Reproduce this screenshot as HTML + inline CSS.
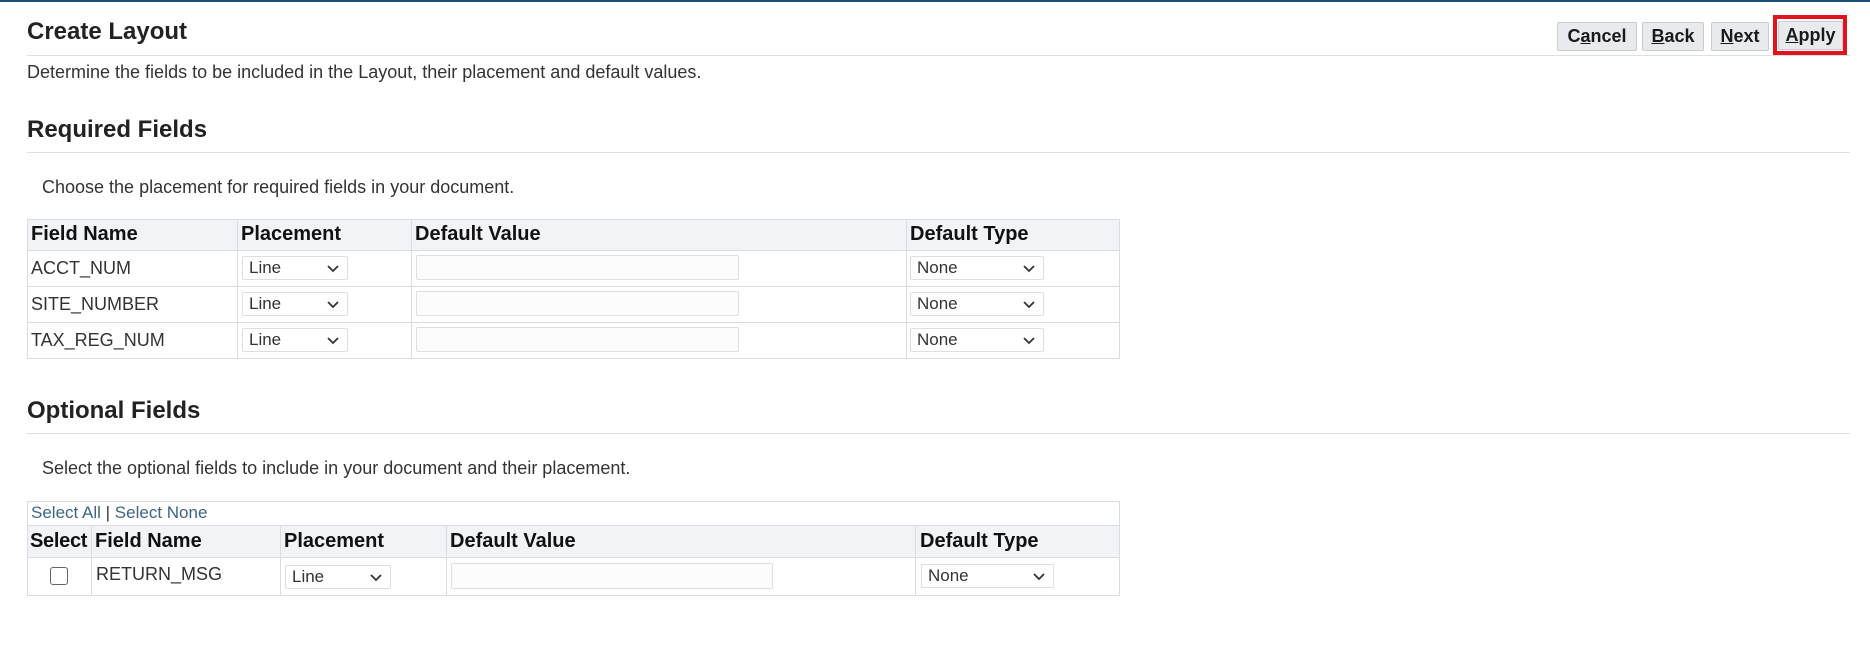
<!DOCTYPE html>
<html><head><meta charset="utf-8"><style>
*{box-sizing:border-box;margin:0;padding:0}
body{width:1870px;height:667px;background:#fff;font-family:"Liberation Sans",Arial,sans-serif;color:#2b2b2b;position:relative;overflow:hidden}
.a{position:absolute;white-space:nowrap}
.topbar{left:0;top:0;width:1870px;height:2px;background:#1f4e79}
.h1{font-size:24px;font-weight:bold;color:#222}
.hr{height:1px;background:#dcdfe3}
.t16{font-size:18px;color:#333}
.btn{top:22px;height:29px;border:1px solid #c9ccd0;border-radius:2px;background:#e8eaed;font-size:18px;font-weight:bold;color:#1a1a1a;text-align:center;line-height:27px}
.btn u{text-decoration:underline}
.box{border:1px solid #d8dde3}
.hdr{background:#f2f3f6}
.vl{width:1px;background:#d8dde3}
.hl{height:1px;background:#d8dde3}
.th{font-size:20px;font-weight:bold;color:#111}
.td{font-size:18px;color:#333}
.sel{border:1px solid #dcdfe3;border-radius:2px;background:#fff;font-size:17px;color:#333;padding-left:6px;line-height:22px}
.sel svg{position:absolute;right:8px;top:8px}
.inp{border:1px solid #dcdfe3;border-radius:2px;background:#fcfcfd}
.lnk{color:#3c6586;font-size:17px}
</style></head><body>
<div class="a topbar"></div>
<div class="a h1" style="left:27px;top:18px">Create Layout</div>
<div class="a btn" style="left:1557px;width:80px">C<u>a</u>ncel</div>
<div class="a btn" style="left:1642px;width:62px"><u>B</u>ack</div>
<div class="a btn" style="left:1711px;width:58px"><u>N</u>ext</div>
<div class="a" style="left:1773px;top:15px;width:74px;height:40px;border:4px solid #e3121c"></div>
<div class="a btn" style="left:1778px;width:65px;top:21px"><u>A</u>pply</div>
<div class="a hr" style="left:27px;top:55px;width:1823px"></div>
<div class="a t16" style="left:27px;top:62px">Determine the fields to be included in the Layout, their placement and default values.</div>
<div class="a h1" style="left:27px;top:116px">Required Fields</div>
<div class="a hr" style="left:27px;top:152px;width:1823px"></div>
<div class="a t16" style="left:42px;top:177px">Choose the placement for required fields in your document.</div>

<div class="a box" style="left:27px;top:219px;width:1093px;height:140px"></div>
<div class="a hdr" style="left:28px;top:220px;width:1091px;height:30px"></div>
<div class="a hl" style="left:28px;top:250px;width:1091px"></div>
<div class="a hl" style="left:28px;top:286px;width:1091px"></div>
<div class="a hl" style="left:28px;top:322px;width:1091px"></div>
<div class="a vl" style="left:237px;top:220px;height:138px"></div>
<div class="a vl" style="left:411px;top:220px;height:138px"></div>
<div class="a vl" style="left:906px;top:220px;height:138px"></div>
<div class="a th" style="left:31px;top:223px">Field Name</div>
<div class="a th" style="left:241px;top:223px">Placement</div>
<div class="a th" style="left:415px;top:223px">Default Value</div>
<div class="a th" style="left:910px;top:223px">Default Type</div>

<div class="a td" style="left:31px;top:258px">ACCT_NUM</div>
<div class="a td" style="left:31px;top:294px">SITE_NUMBER</div>
<div class="a td" style="left:31px;top:330px">TAX_REG_NUM</div>

<div class="a sel" style="left:242px;top:256px;width:106px;height:24px">Line<svg width="12" height="8"><path d="M1 1l5 5 5-5" stroke="#333" stroke-width="1.8" fill="none"/></svg></div>
<div class="a sel" style="left:242px;top:292px;width:106px;height:24px">Line<svg width="12" height="8"><path d="M1 1l5 5 5-5" stroke="#333" stroke-width="1.8" fill="none"/></svg></div>
<div class="a sel" style="left:242px;top:328px;width:106px;height:24px">Line<svg width="12" height="8"><path d="M1 1l5 5 5-5" stroke="#333" stroke-width="1.8" fill="none"/></svg></div>
<div class="a inp" style="left:416px;top:255px;width:323px;height:25px"></div>
<div class="a inp" style="left:416px;top:291px;width:323px;height:25px"></div>
<div class="a inp" style="left:416px;top:327px;width:323px;height:25px"></div>
<div class="a sel" style="left:910px;top:256px;width:134px;height:24px">None<svg width="12" height="8"><path d="M1 1l5 5 5-5" stroke="#333" stroke-width="1.8" fill="none"/></svg></div>
<div class="a sel" style="left:910px;top:292px;width:134px;height:24px">None<svg width="12" height="8"><path d="M1 1l5 5 5-5" stroke="#333" stroke-width="1.8" fill="none"/></svg></div>
<div class="a sel" style="left:910px;top:328px;width:134px;height:24px">None<svg width="12" height="8"><path d="M1 1l5 5 5-5" stroke="#333" stroke-width="1.8" fill="none"/></svg></div>

<div class="a h1" style="left:27px;top:397px">Optional Fields</div>
<div class="a hr" style="left:27px;top:433px;width:1823px"></div>
<div class="a t16" style="left:42px;top:458px">Select the optional fields to include in your document and their placement.</div>

<div class="a box" style="left:27px;top:501px;width:1093px;height:95px"></div>
<div class="a lnk" style="left:31px;top:503px">Select All <span style="color:#333">|</span> Select None</div>
<div class="a hdr" style="left:28px;top:525px;width:1091px;height:32px"></div>
<div class="a hl" style="left:28px;top:525px;width:1091px"></div>
<div class="a hl" style="left:28px;top:557px;width:1091px"></div>
<div class="a vl" style="left:91px;top:526px;height:69px"></div>
<div class="a vl" style="left:280px;top:526px;height:69px"></div>
<div class="a vl" style="left:446px;top:526px;height:69px"></div>
<div class="a vl" style="left:915px;top:526px;height:69px"></div>
<div class="a th" style="left:30px;top:530px;letter-spacing:-0.3px">Select</div>
<div class="a th" style="left:95px;top:530px">Field Name</div>
<div class="a th" style="left:284px;top:530px">Placement</div>
<div class="a th" style="left:450px;top:530px">Default Value</div>
<div class="a th" style="left:920px;top:530px">Default Type</div>
<div class="a" style="left:50px;top:567px;width:18px;height:18px;border:1.5px solid #666;border-radius:3px;background:#fff"></div>
<div class="a td" style="left:96px;top:564px">RETURN_MSG</div>
<div class="a sel" style="left:285px;top:565px;width:106px;height:24px">Line<svg width="12" height="8"><path d="M1 1l5 5 5-5" stroke="#333" stroke-width="1.8" fill="none"/></svg></div>
<div class="a inp" style="left:451px;top:563px;width:322px;height:26px"></div>
<div class="a sel" style="left:921px;top:564px;width:133px;height:24px">None<svg width="12" height="8"><path d="M1 1l5 5 5-5" stroke="#333" stroke-width="1.8" fill="none"/></svg></div>
</body></html>
